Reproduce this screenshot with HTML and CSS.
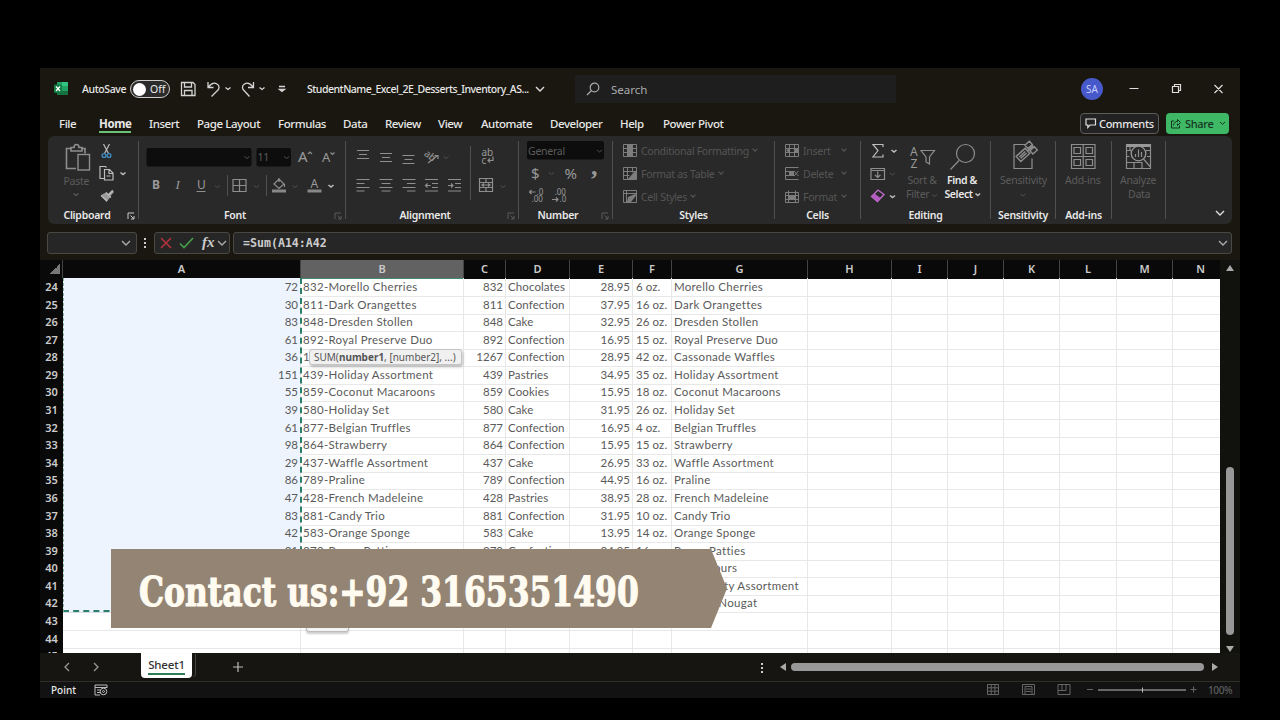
FILE: index.html
```html
<!DOCTYPE html>
<html lang="en">
<head>
  <meta charset="UTF-8">
  <title>StudentName_Excel_2E_Desserts_Inventory</title>
  <link rel="stylesheet" href="styles.css">
</head>
<body>
  <div class="window">
    <header class="titlebar">
      <svg class="logo" width="16" height="16" viewBox="0 0 16 16">
        <rect x="4" y="1" width="11" height="13" rx="1" fill="#21a366"/>
        <path d="M9 1h5a1 1 0 0 1 1 1v3H9z" fill="#33c481"/>
        <path d="M4 10h11v3a1 1 0 0 1-1 1H5a1 1 0 0 1-1-1z" fill="#17703f"/>
        <rect x="1" y="3.500" width="8" height="8.500" rx="1" fill="#107c41"/>
        <path d="M3 5.500l4 4.500M7 5.500l-4 4.500" stroke="#fff" stroke-width="1.300"/>
      </svg>
      <span class="autosave">AutoSave</span>
      <span class="toggle"><i></i>Off</span>
      <svg class="quick" width="110" height="20" viewBox="178 79 110 20">
        <g fill="none" stroke="#d4d4d4" stroke-width="1.300">
          <path d="M181.500 82.500h11.500l2 2v11h-13.500zM184.500 82.500v4.500h7v-4.500M184.500 95.500v-5h7.500v5"/>
          <path d="M208 82v5.500h5.500M208.500 87c3-4 6-4.500 8.500-3 3 2 2.500 5 0 7l-5.500 5.500"/>
          <path d="M253.500 82v5.500h-5.500M253 87c-3-4-6-4.500-8.500-3-3 2-2.500 5 0 7l5 5.500"/>
          <path d="M225.500 87.500l2.500 2 2.500-2M259.500 87.500l2.500 2 2.500-2M279 86.500h6M279.500 89.500l2.500 2 2.500-2z"/>
        </g>
      </svg>
      <span class="filename">StudentName_Excel_2E_Desserts_Inventory_AS...</span>
      <svg class="chev" width="10" height="6" viewBox="0 0 10 6"><path d="M1 1l4 4 4-4"/></svg>
      <div class="search">
        <svg width="14" height="14" viewBox="0 0 14 14"><circle cx="8.500" cy="5.500" r="4.300"/><path d="M5.500 8.500L1 13"/></svg>
        Search
      </div>
      <span class="avatar">SA</span>
      <svg class="controls" width="100" height="16" viewBox="1126 81 100 16">
        <path d="M1129.500 88.500h9M1172.500 86.500h6v6h-6zM1174.500 86v-1.500h6v6h-1.500M1214.500 85l8 8M1222.500 85l-8 8"/>
      </svg>
    </header>

    <div class="tabrow">
      <nav class="tabs">
        <span>File</span><span class="active">Home</span><span>Insert</span><span>Page Layout</span>
        <span>Formulas</span><span>Data</span><span>Review</span><span>View</span>
        <span>Automate</span><span>Developer</span><span>Help</span><span>Power Pivot</span>
      </nav>
      <span class="comments">
        <svg width="12" height="11" viewBox="0 0 12 11"><path d="M1 1h9.500v6H5L2.800 9.500V7H1z"/></svg>Comments
      </span>
      <span class="share">
        <svg width="12" height="11" viewBox="0 0 12 11"><path d="M4 3H1.500v7h8V7.500M3.500 7.500c.5-3 2-4 4-4V1.500l3 3-3 3V5.500"/></svg>Share
        <svg class="small" width="7" height="5" viewBox="0 0 7 5"><path d="M1 1l2.500 2.300L6 1"/></svg>
      </span>
    </div>

    <section class="ribbon">
      <div class="group clipboard">
        <svg width="90" height="70" viewBox="48 138 90 70">
          <g class="dim">
            <path d="M76 168.500h-9.500v-20h5M81 148.500h4v5M71 151v-3.500h3c0-4 5-4 5 0h3v3.500z" stroke-width="1.600"/>
            <rect x="78" y="154.500" width="11.500" height="15.500" stroke-width="1.400"/>
            <path d="M73.500 193.500l2.500 2 2.500-2" opacity=".5"/>
          </g>
          <text x="63.500" y="185" class="off">Paste</text>
          <path d="M103.500 144l5 9.500M109.500 144l-5 9.500" class="lite"/>
          <g fill="none" stroke="#3f8fc4" stroke-width="1.300"><circle cx="104" cy="155.500" r="1.900"/><circle cx="109" cy="155.500" r="1.900"/></g>
          <path class="lite" d="M104 178.500h-4v-12h5.500l1 1M104.500 169.500h5l3.500 3.500v7h-8.500zM109 169.500v4h4M106.500 176h4"/>
          <path d="M120.500 172.500l2.500 2 2.500-2" class="lite bold"/>
          <path d="M101 195l5-2.500 4.500 4.500-4 5zM108 194l4-4 2 2-3.500 4" fill="#999"/>
          <path class="lite" d="M101 195.500l6 5.500M106 192.500l5 5M109 194.500l4-4"/>
        </svg>
        <label>Clipboard</label>
        <svg class="launch on" width="8" height="8" viewBox="0 0 8 8"><path d="M7 1H1v6M3.500 3.500L7 7M7 4v3H4"/></svg>
      </div>

      <div class="group font">
        <svg width="206" height="70" viewBox="139 138 206 70">
          <rect x="146.500" y="148" width="105" height="18.500" rx="2" fill="#0d0d0d"/>
          <rect x="256.500" y="148" width="34.500" height="18.500" rx="2" fill="#0d0d0d"/>
          <text x="257.500" y="161" class="off">11</text>
          <path class="faint" d="M244.500 156.500l2.500 2 2.500-2M284 156.500l2.500 2 2.500-2M215 185.500l2.500 2 2.500-2M254 185.500l2.500 2 2.500-2M292.500 185.500l2.500 2 2.500-2M227.500 175v21M266.500 175v21"/>
          <text x="298" y="161.500" font-size="15">A</text><text x="322" y="161.500" font-size="13">A</text>
          <path class="dim" d="M308 154l2-2 2 2M330.500 152.500l2 2 2-2"/>
          <text x="152" y="189" font-weight="700" font-size="12">B</text>
          <text x="175.500" y="189" font-style="italic" font-size="13" font-family="Liberation Serif">I</text>
          <text x="197" y="188.500" font-size="12">U</text>
          <path class="dim" d="M196.500 191.500h9M233 179.500h13v12h-13zM239.500 179.500v12M233 185.500h13"/>
          <path class="dim" d="M274 184l5-5 5 5-5 4.500zM279 178v4M284.500 184v3"/>
          <rect x="272" y="189.500" width="14" height="3" fill="#888"/>
          <text x="310.500" y="188" font-size="12">A</text>
          <rect x="307.500" y="189.500" width="14" height="3" fill="#888"/>
          <path class="lite bold" d="M328.500 185l2.500 2 2.500-2"/>
        </svg>
        <label>Font</label>
        <svg class="launch" width="8" height="8" viewBox="0 0 8 8"><path d="M7 1H1v6M3.500 3.500L7 7M7 4v3H4"/></svg>
      </div>

      <div class="group align">
        <svg width="172" height="70" viewBox="346 138 172 70">
          <path class="dim" d="M357 150.500h12M359 154.500h8M357 158.500h12M380 153.500h12M382 157.500h8M380 161.500h12M402.500 155.500h12M404.500 159.500h8M402.500 163.500h12"/>
          <path class="dim" d="M356.500 179.500h13M356.500 183.500h8M356.500 187.500h13M356.500 191h8M379.500 179.500h13M381.500 183.500h9M379.500 187.500h13M381.500 191h9M402.500 179.500h13M407 183.500h8.500M402.500 187.500h13M407 191h8.500"/>
          <path class="dim" d="M425 179.500h13M432 183.500h6M432 187.500h6M425 191h13M430.500 185.500h-5M427.500 183.500l-2 2 2 2M448 179.500h13M455 183.500h6M455 187.500h6M448 191h13M448 185.500h5M451 183.500l2 2-2 2"/>
          <text x="424" y="157" font-size="10" transform="rotate(38 427 155)">ab</text>
          <path class="dim" d="M428 163l9.500-7.500M434.500 155.500h3.500v3.500"/>
          <path class="faint" d="M443.500 156.500l2.500 2 2.500-2M500.500 185.500l2.500 2 2.500-2M470.500 146v54"/>
          <text x="481.500" y="156" font-size="10">ab</text><text x="481.500" y="163.500" font-size="10">c</text>
          <path class="dim" d="M493 156.500v4h-5M490 158.500l-2 2 2 2M479.500 178.500h13v13h-13zM479.500 182.500h13M479.500 187.500h13M486 178.500v4M486 187.500v4M482 185h8M484 183.500l-2 1.500 2 1.500M488 183.500l2 1.500-2 1.500"/>
        </svg>
        <label>Alignment</label>
        <svg class="launch" width="8" height="8" viewBox="0 0 8 8"><path d="M7 1H1v6M3.500 3.500L7 7M7 4v3H4"/></svg>
      </div>

      <div class="group number">
        <svg width="93" height="70" viewBox="519 138 93 70">
          <rect x="527" y="141" width="77" height="18.500" rx="2" fill="#0d0d0d"/>
          <text x="528" y="154.500" class="off">General</text>
          <path class="faint" d="M597 150l2.500 2 2.500-2M549 172.500l2.500 2 2.500-2"/>
          <text x="531" y="179" font-size="15">$</text><text x="564.500" y="179" font-size="15">%</text>
          <text x="591" y="175" class="comma">,</text>
          <text x="536.500" y="195" font-size="8">.0</text><text x="531.500" y="202" font-size="8">.00</text>
          <text x="554.500" y="195" font-size="8">.00</text><text x="559.500" y="202" font-size="8">.0</text>
          <path class="dim" d="M535.500 192h-6M531.500 190l-2 2 2 2M552 199.500h6M556 197.500l2 2-2 2"/>
        </svg>
        <label>Number</label>
        <svg class="launch" width="8" height="8" viewBox="0 0 8 8"><path d="M7 1H1v6M3.500 3.500L7 7M7 4v3H4"/></svg>
      </div>

      <div class="group styles">
        <div class="lines">
          <div><svg class="cell-icon" width="14" height="13" viewBox="0 0 14 13"><path d="M.5.5h13v12H.500zM.5 4.500h13M.5 8.500h13M4.500.5v12M9.500.5v12"/><path class="fill" d="M5 1h4v11H5z"/></svg>Conditional Formatting<i class="dd"></i></div>
          <div><svg class="cell-icon" width="14" height="13" viewBox="0 0 14 13"><path d="M.5.5h13v12H.500zM.5 4.500h13M.5 8.500h6M4.500.5v12M9.500.5v5"/><path class="fill" d="M5 12l7-8 2 1.500V12z"/></svg>Format as Table<i class="dd"></i></div>
          <div><svg class="cell-icon" width="14" height="13" viewBox="0 0 14 13"><path d="M.5.5h13v12H.500zM.5 3.500h13M3.500.5v12"/><path class="fill" d="M4 12l1-5 7-3 1.500 1L8 12z"/></svg>Cell Styles<i class="dd"></i></div>
        </div>
        <label>Styles</label>
      </div>

      <div class="group cells">
        <div class="lines">
          <div><svg class="cell-icon" width="14" height="13" viewBox="0 0 14 13"><path d="M.5.5h13v12H.500zM.5 4.500h13M.5 8.500h13M4.500.5v12M9.500.5v12"/><path class="fill" d="M1 6.500l4-3v6zM9 4.500h4v4H9z"/></svg><span>Insert</span><i class="dd"></i></div>
          <div><svg class="cell-icon" width="14" height="13" viewBox="0 0 14 13"><path d="M.5.5h13M.5 12.500h13M.5.5v12M.5 4.500h4M.5 8.500h4M9 4l4.500 5M13.500 4L9 9"/><path class="fill" d="M4 4h5v5H4z"/></svg><span>Delete</span><i class="dd"></i></div>
          <div><svg class="cell-icon" width="14" height="13" viewBox="0 0 14 13"><path d="M.5 2.500h13v10H.500zM3.500.5v12M10.500.5v12M.5 5.500h13M.5 9.500h13"/><path class="fill" d="M4 5.500h6v4H4z"/></svg><span>Format</span><i class="dd"></i></div>
        </div>
        <label>Cells</label>
      </div>

      <div class="group editing">
        <svg width="129" height="70" viewBox="861 138 129 70">
          <path class="lite" d="M883 147v-2.500h-10l5 6-5 6.500h10v-2.500" stroke-width="1.500"/>
          <path class="lite bold" d="M891.500 150l2.500 2 2.500-2M890 195.500l2.500 2 2.500-2"/>
          <path class="dim" d="M871 168.500h13.500v11H871zM871 170.500h13.500M877.700 171.500v6M875 175l2.700 2.500 2.700-2.500"/>
          <path class="faint" d="M890 173l2.500 2 2.500-2M932 194.500l2.500 2 2.500-2"/>
          <path d="M871.500 196.500l6.500-6.500 6 4.500-6.500 7z" fill="none" stroke="#c56fd0" stroke-width="1.300"/>
          <path d="M871.500 196.500l3-3 6 4.500-3 3.500z" fill="#b35cc2"/>
          <text x="910" y="156" font-size="12">A</text><text x="910.500" y="168" font-size="12">Z</text>
          <path class="dim" d="M921 150.500h13.500l-5 6.500v7l-3.500-2v-5z"/>
          <circle cx="965.500" cy="153.500" r="9" class="dim"/><path class="dim" d="M959 160.500l-8.500 9" stroke-width="1.600"/>
          <text x="907.500" y="184" class="off">Sort &amp;</text><text x="906" y="198" class="off">Filter</text>
          <text x="947" y="184" class="bright">Find &amp;</text><text x="944.500" y="198" class="bright">Select</text>
          <path class="lite bold" d="M975.500 193.500l2.300 2 2.300-2"/>
        </svg>
        <label>Editing</label>
      </div>

      <div class="group sens">
        <svg width="64" height="70" viewBox="991 138 64 70">
          <path class="dim" d="M1026 144.500h-12v24h18v-10"/>
          <g transform="rotate(-42 1027 152)" class="dim"><path d="M1016 148h12v7h-12zM1018 150.500h8M1018 152.500h8M1030 145.500h6v4.500h-6zM1030 153h6v4.500h-6zM1028 151.500h8" stroke-width="1.400"/></g>
          <text x="1000" y="184" class="off">Sensitivity</text>
          <path class="faint" d="M1020.500 194l2.500 2 2.500-2"/>
        </svg>
        <label>Sensitivity</label>
      </div>
      <div class="group addins">
        <svg width="55" height="70" viewBox="1056 138 55 70">
          <path class="dim" d="M1071.500 144.500h23.500v24h-23.500zM1083.200 144.500v24M1071.500 156.500h23.500M1074 147.500h6.500v6h-6.500zM1086 147.500h6.500v6h-6.500zM1074 159.500h6.500v6h-6.500zM1086 159.500h6.500v6h-6.500z"/>
          <text x="1065" y="184" class="off">Add-ins</text>
        </svg>
        <label>Add-ins</label>
      </div>
      <div class="group analyze">
        <svg width="53" height="70" viewBox="1112 138 53 70">
          <path class="dim" d="M1126.500 144.500h24v24h-24zM1126.500 150.500h5M1146 150.500h4.500M1126.500 156.500h3M1126.500 162.500h16M1134 163v5.500M1142 163v5.500M1147 156.500h3.500M1130 144.500v6"/>
          <path d="M1126.500 144h24v3h-24z" fill="#999"/>
          <circle cx="1138.500" cy="153.500" r="7.300" fill="#292929" stroke="#999" stroke-width="1.300"/>
          <path class="dim" d="M1143.500 159l7 8M1135.500 157v-3M1138.500 157v-7.500M1141.500 157v-5" stroke-width="2"/>
          <text x="1120" y="184" class="off">Analyze</text><text x="1128" y="198" class="off">Data</text>
        </svg>
      </div>
      <svg class="collapse chev" width="10" height="6" viewBox="0 0 10 6"><path d="M1 1l4 4 4-4"/></svg>
    </section>

    <div class="formula-row">
      <div class="box namebox"><svg class="chev" width="10" height="6" viewBox="0 0 10 6"><path d="M1 1l4 4 4-4"/></svg></div>
      <svg class="dots" width="4" height="12" viewBox="0 0 4 12"><path d="M1 1h2v2H1zM1 5h2v2H1zM1 9h2v2H1z"/></svg>
      <div class="box fx">
        <svg width="38" height="14" viewBox="0 0 38 14"><path d="M1 2l10 10M11 2L1 12" stroke="#b5323c"/><path d="M20 7.500l4 4L33 2" stroke="#47a04b"/></svg>
        <em>fx</em>
        <svg class="chev" width="10" height="6" viewBox="0 0 10 6"><path d="M1 1l4 4 4-4"/></svg>
      </div>
      <div class="box formula"><span>=Sum(A14:A42</span><svg class="chev" width="10" height="6" viewBox="0 0 10 6"><path d="M1 1l4 4 4-4"/></svg></div>
    </div>

    <main class="sheet">
      <div class="grid" id="grid">
        <div class="row head">
          <b class="corner"></b><b>A</b><b class="sel">B</b><b>C</b><b>D</b><b>E</b><b>F</b><b>G</b><b>H</b><b>I</b><b>J</b><b>K</b><b>L</b><b>M</b><b>N</b>
        </div>
      </div>
      <div class="vscroll"><i class="up"></i><i class="thumb"></i><i class="down"></i></div>
      <div class="ants"></div>
      <div class="hint">SUM(<b>number1</b>, [number2], ...)</div>
      <div class="size-tip">29R x 1C</div>
    </main>

    <div class="sheetbar">
      <svg class="arrows" width="40" height="10" viewBox="0 0 40 10"><path d="M6 1L2 5l4 4M31 1l4 4-4 4"/></svg>
      <span class="sheet-tab"><u>Sheet1</u></span>
      <svg class="plus" width="10" height="10" viewBox="0 0 10 10"><path d="M5 0v10M0 5h10"/></svg>
      <svg class="dots" width="4" height="12" viewBox="0 0 4 12"><path d="M1 1h2v2H1zM1 5h2v2H1zM1 9h2v2H1z"/></svg>
      <i class="left"></i><i class="hthumb"></i><i class="right"></i>
    </div>

    <footer class="status">
      <span>Point</span>
      <svg width="14" height="12" viewBox="0 0 14 12"><path d="M13 4V1H1v10h5M1 3.500h12M3 6h3M3 8.500h3"/><circle cx="9.500" cy="7.500" r="3.300"/><circle cx="9.500" cy="7.500" r="1"/></svg>
      <svg class="views" width="212" height="14" viewBox="985 684 212 14">
        <path d="M987.500 685.500h11v10h-11zM991.200 685.500v10M994.900 685.500v10M987.500 688.800h11M987.500 692.200h11M1022.500 685.500h12v10h-12zM1025 687.500h7v8h-7zM1026 690h5M1026 692.500h5M1058 685.500h12v10h-12zM1062 685.500v6M1066 685.500v6h-8M1087 690.500h6M1190.500 690.500h6M1193.500 687.500v6"/>
        <path d="M1098 691h88M1142.500 688.500v5" class="slider"/>
      </svg>
      <span class="zoom">100%</span>
    </footer>
  </div>

  <div class="banner"><span>Contact us:+92 3165351490</span></div>

  <script>
    const rows = [
      [72, "832-Morello Cherries", 832, "Chocolates", "28.95", "6 oz."],
      [30, "811-Dark Orangettes", 811, "Confection", "37.95", "16 oz."],
      [83, "848-Dresden Stollen", 848, "Cake", "32.95", "26 oz."],
      [61, "892-Royal Preserve Duo", 892, "Confection", "16.95", "15 oz."],
      [36, "1", 1267, "Confection", "28.95", "42 oz.", "Cassonade Waffles"],
      [151, "439-Holiday Assortment", 439, "Pastries", "34.95", "35 oz."],
      [55, "859-Coconut Macaroons", 859, "Cookies", "15.95", "18 oz."],
      [39, "580-Holiday Set", 580, "Cake", "31.95", "26 oz."],
      [61, "877-Belgian Truffles", 877, "Confection", "16.95", "4 oz."],
      [98, "864-Strawberry", 864, "Confection", "15.95", "15 oz."],
      [29, "437-Waffle Assortment", 437, "Cake", "26.95", "33 oz."],
      [86, "789-Praline", 789, "Confection", "44.95", "16 oz."],
      [47, "428-French Madeleine", 428, "Pastries", "38.95", "28 oz."],
      [83, "881-Candy Trio", 881, "Confection", "31.95", "10 oz."],
      [42, "583-Orange Sponge", 583, "Cake", "13.95", "14 oz."],
      [31, "370-Pecan Patties", 370, "Confection", "24.95", "16 oz."],
      ["", "", "", "", "", "", "Petits Fours"],
      ["", "", "", "", "", "", "Nut Variety Assortment"],
      ["", "", "", "", "", "", "Almond Nougat"],
      [], [], []
    ];
    const grid = document.getElementById("grid");
    rows.forEach((r, i) => {
      const item = r[1] || "";
      const name = r[6] || item.slice(item.indexOf("-") + 1);
      const cells = [r[0], item, r[2], r[3], r[4], r[5], name, "", "", "", "", "", "", ""];
      const row = document.createElement("div");
      row.className = "row" + (i < 19 ? " picked" : "");
      row.innerHTML = `<b>${24 + i}</b>` + cells.map(c => `<span>${c ?? ""}</span>`).join("");
      grid.appendChild(row);
    });
  </script>
</body>
</html>
```
FILE: styles.css
```css
* {
  box-sizing: border-box;
}
body {
  margin: 0;
  width: 1280px;
  height: 720px;
  background: #000;
  color: #e8e8e8;
  font-family: "Noto Sans", sans-serif;
  font-size: 11px;
  overflow: hidden;
  position: relative;
}
svg {
  display: block;
  flex: none;
  fill: none;
}
.window {
  width: 1200px;
  height: 630px;
  margin: 68px 0 0 40px;
  background: #19170f;
  display: flex;
  flex-direction: column;
  overflow: hidden;
}

/* title bar */
.titlebar {
  height: 42px;
  display: flex;
  align-items: center;
  white-space: nowrap;
  flex: none;
}
.logo {
  margin-left: 13px;
}
.autosave {
  width: 48px;
  margin-left: 13px;
  font-size: 10.5px;
  font-weight: 500;
  letter-spacing: -.4px;
}
.toggle {
  width: 40px;
  height: 18px;
  border: 1.5px solid #ccc;
  border-radius: 9px;
  display: flex;
  align-items: center;
  gap: 4px;
  padding-left: 2px;
  font-size: 10.5px;
  background: #2b2b2b;
}
.toggle i {
  width: 13px;
  height: 13px;
  border-radius: 50%;
  background: #fff;
}
.quick {
  margin-left: 8px;
}
.filename {
  width: 222px;
  margin-left: 19px;
  font-size: 10.5px;
  font-weight: 500;
  letter-spacing: -.48px;
}
.chev path {
  stroke: #ddd;
  stroke-width: 1.4;
}
.titlebar > .chev {
  margin-left: 6px;
}
.search {
  width: 321px;
  height: 28px;
  margin-left: 30px;
  padding-left: 11px;
  background: #1e1e1f;
  color: #aaa;
  font-size: 11.5px;
  display: flex;
  align-items: center;
  gap: 11px;
}
.search svg {
  stroke: #aaa;
  stroke-width: 1.2;
}
.avatar {
  width: 22px;
  height: 22px;
  margin-left: 185px;
  border-radius: 50%;
  background: #4759ca;
  color: #c9d0ff;
  font-size: 10px;
  line-height: 22px;
  text-align: center;
}
.controls {
  margin-left: 23px;
  stroke: #ddd;
  stroke-width: 1.2;
}

/* tabs */
.tabrow {
  height: 26px;
  display: flex;
  align-items: center;
  flex: none;
}
.tabs {
  width: 1021px;
  padding-left: 19px;
  display: grid;
  grid-template-columns: 40px 50px 48px 81px 65px 42px 53px 43px 69px 70px 43px 80px;
  font-size: 11.5px;
  font-weight: 500;
  letter-spacing: -.42px;
  white-space: nowrap;
}
.tabs span {
  height: 19px;
  line-height: 19px;
  justify-self: start;
}
.tabs .active {
  font-weight: 700;
  border-bottom: 2px solid #6cc077;
}
.comments, .share {
  height: 21px;
  display: flex;
  align-items: center;
  border-radius: 4px;
  font-size: 11px;
  font-weight: 500;
  letter-spacing: -.3px;
}
.comments {
  width: 79px;
  margin-left: 19px;
  padding-left: 4px;
  gap: 2px;
  border: 1px solid #5c5c5c;
  background: #222;
}
.comments svg {
  stroke: #ddd;
  stroke-width: 1.2;
}
.share {
  width: 63px;
  margin-left: 7px;
  padding-left: 4px;
  gap: 3px;
  background: #3fb866;
  color: #14351f;
}
.share svg {
  stroke: #14351f;
  stroke-width: 1;
}
.share .small {
  margin-left: 2px;
}

/* ribbon */
.ribbon {
  height: 88px;
  margin: 0 8px;
  background: #292929;
  border-radius: 6px;
  display: flex;
  flex: none;
}
.group {
  position: relative;
  height: 78px;
  margin-top: 5px;
  border-right: 1px solid #505050;
  text-align: center;
  flex: none;
}
.group > svg:first-child {
  margin-top: -3px;
}
.group label {
  position: absolute;
  left: 0;
  right: 0;
  bottom: -4px;
  font-size: 10.5px;
  font-weight: 600;
  line-height: 15px;
  letter-spacing: -.25px;
}
.group .launch {
  position: absolute;
  right: 3px;
  bottom: -1px;
  stroke: #5b5b5b;
}
.group .launch.on {
  stroke: #ccc;
}
.clipboard { width: 91px; }
.clipboard label { right: 12px; }
.font { width: 207px; }
.font label { right: 14px; }
.align { width: 173px; }
.align label { right: 14px; }
.number { width: 94px; }
.number label { right: 15px; }
.styles { width: 162px; }
.cells { width: 86px; }
.editing { width: 130px; }
.sens { width: 65px; }
.addins { width: 56px; }
.analyze { width: 54px; }
.ribbon text {
  fill: #999;
}
.ribbon text.comma {
  font: bold 26px "Liberation Serif", serif;
}
.ribbon text.off {
  fill: #5c5c5c;
  font-size: 10.5px;
  letter-spacing: -.25px;
}
.ribbon text.bright {
  fill: #e8e8e8;
  font-size: 10.5px;
  font-weight: 600;
  letter-spacing: -.4px;
}
.dim {
  stroke: #8e8e8e;
  stroke-width: 1.2;
}
.faint {
  stroke: #505050;
}
.lite {
  stroke: #bdbdbd;
  stroke-width: 1.2;
}
.bold {
  stroke-width: 1.6;
}
.lines {
  margin-top: -2px;
  padding-left: 10px;
  color: #555;
  font-size: 10.5px;
  letter-spacing: -.25px;
}
.lines div {
  height: 23px;
  display: flex;
  align-items: center;
  gap: 4px;
  white-space: nowrap;
}
.styles .lines {
  letter-spacing: -.3px;
}
.cells .lines span {
  width: 35px;
  text-align: left;
}
.cell-icon {
  stroke: #7d7d7d;
}
.cell-icon .fill {
  fill: #7d7d7d;
  stroke: none;
}
.dd {
  width: 4px;
  height: 4px;
  border-right: 1px solid #5a5a5a;
  border-bottom: 1px solid #5a5a5a;
  transform: rotate(45deg);
  margin-top: -3px;
}
.collapse {
  margin: 74px 0 0 49px;
}

/* formula bar */
.formula-row {
  height: 36px;
  padding: 1px 8px 0 7px;
  display: flex;
  align-items: center;
  flex: none;
}
.box {
  height: 22px;
  border: 1px solid #4a4842;
  border-radius: 3px;
  background: #262626;
  display: flex;
  align-items: center;
}
.box .chev path {
  stroke: #aaa;
}
.namebox {
  width: 90px;
  justify-content: flex-end;
  padding-right: 5px;
}
.dots {
  margin: 0 7px 0 6px;
}
.dots path {
  fill: #ccc;
}
.fx {
  width: 76px;
  padding-left: 5px;
  stroke-width: 1.6;
}
.fx em {
  width: 14px;
  margin: 0 2px 0 4px;
  font: italic bold 15px "Liberation Serif", serif;
  color: #ccc;
}
.fx .chev {
  margin-left: -1px;
}
.formula {
  flex: 1;
  margin-left: 3px;
  padding: 0 3px 0 9px;
  justify-content: space-between;
  color: #ccc;
  font: bold 11.6px "DejaVu Sans Mono", monospace;
}

/* sheet */
.sheet {
  position: relative;
  height: 393px;
  display: flex;
  flex: none;
  overflow: hidden;
}
.grid {
  width: 1180px;
  overflow: hidden;
  background: #fff;
}
.row {
  display: grid;
  grid-template-columns: 23px 238px 163px 42px 64px 63px 39px 136px 84px 56px 56px 56px 57px 56px 56px;
  height: 17.58px;
  color: #5a5a5a;
  font-family: Lato, sans-serif;
  font-size: 11.5px;
  line-height: 18px;
  white-space: nowrap;
}
.row span {
  border-right: 1px solid #e8e8e8;
  border-bottom: 1px solid #e8e8e8;
  padding-left: 2px;
}
.row span:nth-child(2), .row span:nth-child(4), .row span:nth-child(6) {
  text-align: right;
  padding-right: 2px;
}
.row span:nth-child(3), .row span:nth-child(8) {
  letter-spacing: .3px;
}
.row span:nth-child(5) {
  letter-spacing: .1px;
}
.row span:nth-child(7) {
  padding-left: 3px;
  letter-spacing: .1px;
}
.row.picked span:nth-child(2) {
  background: #edf4fd;
  border-bottom-color: #d6dce6;
}
.row b {
  background: #090909;
  border-bottom: 1px solid #333;
  color: #ccc;
  text-align: center;
  font-family: "Noto Sans", sans-serif;
  font-size: 11px;
  font-weight: 600;
}
.row.head {
  height: 18px;
}
.head b {
  border-right: 1px solid #444;
  border-bottom: 0;
}
.head .sel {
  background: #626262;
  border-bottom: 1px solid #3f8b70;
}
.head .corner {
  background: linear-gradient(135deg, #090909 50%, #777 50%) 10px 4px / 10px 10px no-repeat #090909;
}
.vscroll {
  width: 20px;
  background: #11110e;
  display: flex;
  flex-direction: column;
  align-items: center;
}
.up, .down {
  border: 4px solid transparent;
}
.up {
  border-bottom: 6px solid #aaa;
  border-top: 0;
  margin-top: 5px;
}
.thumb {
  width: 8px;
  height: 168px;
  margin-top: 196px;
  border-radius: 4px;
  background: #989898;
}
.down {
  border-top: 6px solid #aaa;
  border-bottom: 0;
  margin-top: 11px;
}
.ants {
  position: absolute;
  left: 23px;
  top: 18px;
  width: 239px;
  height: 334px;
  border: 2px dashed #2c7f68;
  border-top: 0;
  border-left: 1px dashed #8dafa6;
}
.hint {
  position: absolute;
  left: 269px;
  top: 89px;
  width: 153px;
  height: 16px;
  padding-left: 4px;
  border: 1px solid #c4c4c4;
  border-radius: 3px;
  background: #f0f0f0;
  box-shadow: 1px 2px 3px rgba(0, 0, 0, .25);
  color: #555;
  font-size: 10px;
  line-height: 14px;
  white-space: nowrap;
}
.size-tip {
  position: absolute;
  left: 266px;
  top: 357px;
  width: 43px;
  height: 15px;
  border: 1px solid #bbb;
  border-radius: 3px;
  background: #f3f3f3;
  box-shadow: 0 2px 2px rgba(0, 0, 0, .2);
  color: #555;
  font-size: 9px;
  line-height: 14px;
  text-align: center;
}

/* sheet tabs and bottom scrollbar */
.sheetbar {
  height: 28px;
  display: flex;
  align-items: center;
  background: #161511;
  flex: none;
}
.arrows {
  margin-left: 23px;
  stroke: #999;
  stroke-width: 1.3;
}
.sheet-tab {
  width: 51px;
  height: 25px;
  margin: -3px 0 0 38px;
  background: #fff;
  border-radius: 0 0 4px 4px;
  box-shadow: 4px 0 0 -1px #161511, 5px 0 0 -1px #444;
  color: #333;
  font-size: 11.5px;
  font-weight: 500;
  letter-spacing: -.2px;
  text-align: center;
  padding-top: 3px;
}
.sheet-tab u {
  display: inline-block;
  height: 19px;
  line-height: 17px;
  text-decoration: none;
  border-bottom: 2px solid #2f7d57;
}
.plus {
  margin-left: 41px;
  stroke: #bbb;
  stroke-width: 1.2;
}
.sheetbar .dots {
  margin: 2px 16px 0 517px;
}
.left, .right {
  border: 4px solid transparent;
}
.left {
  border-right: 6px solid #aaa;
  border-left: 0;
}
.hthumb {
  width: 413px;
  height: 8px;
  margin: 0 8px 0 5px;
  border-radius: 4px;
  background: #989898;
}
.right {
  border-left: 6px solid #aaa;
  border-right: 0;
}

/* status bar */
.status {
  height: 17px;
  border-top: 1px solid #2f2e29;
  background: #121212;
  display: flex;
  align-items: center;
  padding-left: 11px;
  font-size: 10px;
  font-weight: 500;
}
.status span {
  width: 24px;
}
.status svg {
  margin-left: 19px;
  stroke: #bbb;
}
.status .views {
  margin-left: 877px;
  stroke: #666;
}
.status .slider {
  stroke: #bbb;
}
.status .zoom {
  margin-left: 11px;
  color: #5e5e5e;
  letter-spacing: -.4px;
}

/* contact strip laid over the window */
.banner {
  position: absolute;
  left: 111px;
  top: 549px;
  width: 616px;
  height: 79px;
  padding-left: 28px;
  background: #948474;
  clip-path: polygon(0 0, 600px 0, 100% 50%, 600px 100%, 0 100%);
}
.banner span {
  display: block;
  color: #fffbf0;
  font: bold 41px/86px "DejaVu Serif", serif;
  white-space: nowrap;
  -webkit-text-stroke: 1.2px #fffbf0;
  transform: scaleX(.766);
  transform-origin: left;
}
```
